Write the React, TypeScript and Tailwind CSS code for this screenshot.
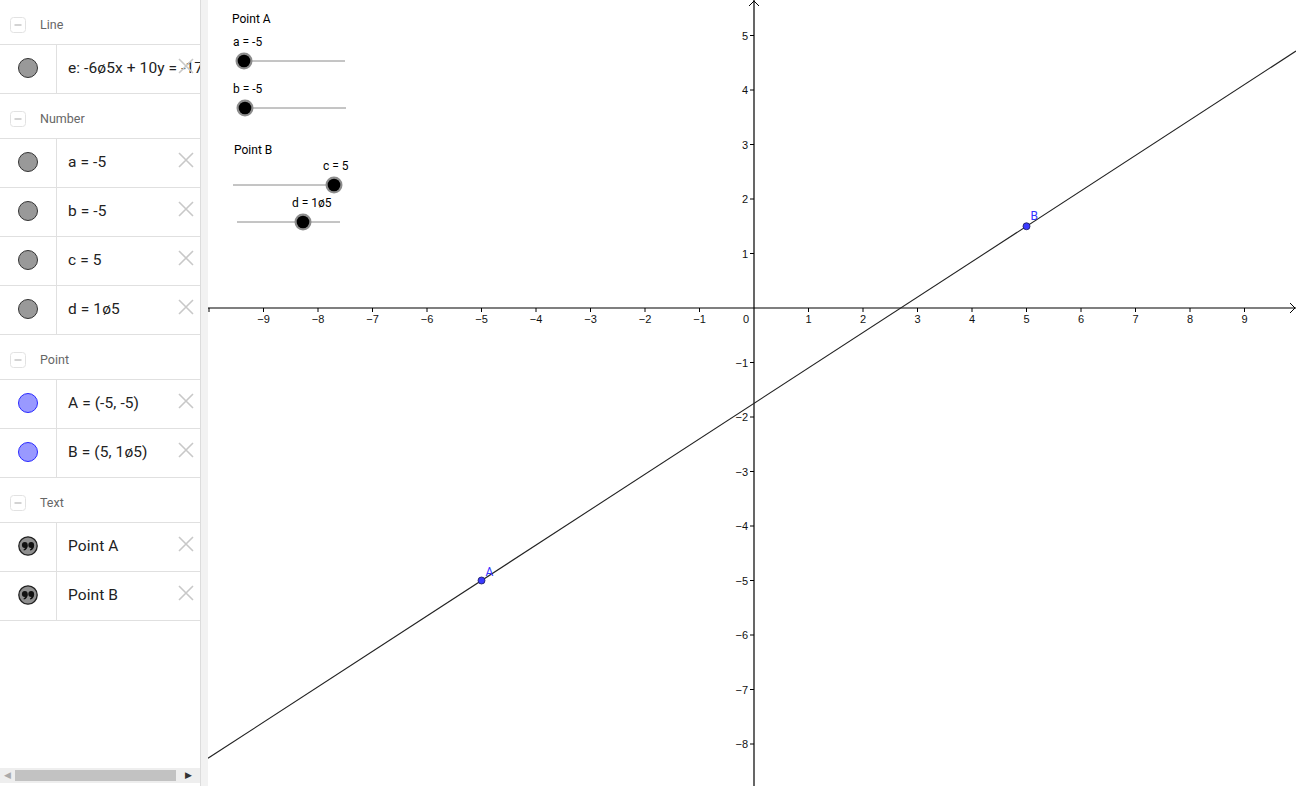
import React from "react";

type Row = { kind: "dot" | "point" | "text"; label: string };
type Group = { title: string; rows: Row[] };

const groups: Group[] = [
  { title: "Line", rows: [{ kind: "dot", label: "e: -6ø5x + 10y = -17ø5" }] },
  {
    title: "Number",
    rows: [
      { kind: "dot", label: "a = -5" },
      { kind: "dot", label: "b = -5" },
      { kind: "dot", label: "c = 5" },
      { kind: "dot", label: "d = 1ø5" },
    ],
  },
  {
    title: "Point",
    rows: [
      { kind: "point", label: "A = (-5, -5)" },
      { kind: "point", label: "B = (5, 1ø5)" },
    ],
  },
  {
    title: "Text",
    rows: [
      { kind: "text", label: "Point A" },
      { kind: "text", label: "Point B" },
    ],
  },
];

function Minus() {
  return (
    <svg width="16" height="16" viewBox="0 0 16 16">
      <rect x="0.5" y="0.5" width="15" height="15" rx="3" fill="#fff" stroke="#e2e2e2" />
      <line x1="4.5" y1="8" x2="11.5" y2="8" stroke="#c4c4c4" strokeWidth="1.5" />
    </svg>
  );
}

function Cross() {
  return (
    <svg width="18" height="18" viewBox="0 0 18 18">
      <path d="M2 2 L16 16 M16 2 L2 16" stroke="#c8c8c8" strokeWidth="1.6" />
    </svg>
  );
}

function Marker({ kind }: { kind: Row["kind"] }) {
  if (kind === "text") {
    return (
      <svg width="20" height="20" viewBox="0 0 20 20">
        <circle cx="10" cy="10" r="9.2" fill="#8f8f8f" stroke="#222" strokeWidth="1.3" />
        <circle cx="6.8" cy="9" r="2.9" fill="#111" />
        <circle cx="13.2" cy="9" r="2.9" fill="#111" />
        <path d="M9.7 9.2 C9.7 12.2, 8.4 13.8, 5.8 14.6 L5.5 13.6 C6.9 12.9, 7.3 12, 7.3 10.8 Z" fill="#111" />
        <path d="M16.1 9.2 C16.1 12.2, 14.8 13.8, 12.2 14.6 L11.9 13.6 C13.3 12.9, 13.7 12, 13.7 10.8 Z" fill="#111" />
      </svg>
    );
  }
  const blue = kind === "point";
  return (
    <span
      className={`block w-[20px] h-[20px] rounded-full border ${
        blue ? "bg-[#9999ff] border-[#2a2aff]" : "bg-[#999999] border-[#333333]"
      }`}
    />
  );
}

function AlgebraView() {
  return (
    <div className="w-[200px] h-full flex flex-col bg-white font-[Roboto,'Liberation_Sans',sans-serif]">
      <div className="flex-1 overflow-hidden">
        {groups.map((g) => (
          <div key={g.title}>
            <div className="h-[45px] flex items-center gap-[14px] pl-[10px] pt-[6px] border-b border-[#e0e0e0]">
              <Minus />
              <span className="text-[12.5px] text-[#666]">{g.title}</span>
            </div>
            {g.rows.map((r) => (
              <div key={r.label} className="relative h-[49px] flex border-b border-[#e0e0e0]">
                <div className="w-[57px] shrink-0 flex items-center justify-center pb-[3px] border-r border-[#e0e0e0]">
                  <Marker kind={r.kind} />
                </div>
                <div className="flex-1 flex items-center pl-[11px] overflow-hidden whitespace-nowrap text-[15.5px] text-[#222] tracking-[0.1px]">
                  {r.label}
                </div>
                <div className="absolute right-[5px] top-[12px]">
                  <Cross />
                </div>
              </div>
            ))}
          </div>
        ))}
      </div>
      <div className="h-[18px] flex items-start">
        <div className="h-[15px] w-full flex items-center bg-[#eeeeee]">
          <span className="w-[15px] flex justify-center text-[9px] text-[#aaa]">◀</span>
          <div className="flex-1 h-[11px] bg-[#c2c2c2]" />
          <span className="w-[24px] flex justify-center text-[9px] text-[#333]">▶</span>
        </div>
      </div>
    </div>
  );
}

const S = 54.5;
const OX = 546;
const OY = 308;
const W = 1088;
const H = 786;
const px = (x: number) => OX + x * S;
const py = (y: number) => OY - y * S;

function Slider({ x1, x2, y, knob }: { x1: number; x2: number; y: number; knob: number }) {
  return (
    <g>
      <line x1={x1} y1={y} x2={x2} y2={y} stroke="#8a8a8a" strokeWidth="1" />
      <circle cx={knob} cy={y} r="8.5" fill="#8c8c8c" />
      <circle cx={knob} cy={y} r="6.3" fill="#000" />
    </g>
  );
}

const tick = "font-['Liberation_Sans',Roboto,sans-serif] text-[11px]";
const lbl = "font-[Roboto,'Liberation_Sans',sans-serif] text-[12px]";

function Graphics() {
  const xs = Array.from({ length: 20 }, (_, i) => i - 10).filter((i) => i !== 0);
  const ys = [5, 4, 3, 2, 1, -1, -2, -3, -4, -5, -6, -7, -8];
  const lineY = (sx: number) => {
    const x = (sx - OX) / S;
    return py(-5 + 0.65 * (x + 5));
  };
  return (
    <div className="flex-1 h-full overflow-hidden bg-white">
      <svg width={W} height={H} viewBox={`0 0 ${W} ${H}`}>
        <line x1="0" y1={OY} x2={W} y2={OY} stroke="#000" strokeWidth="1.2" />
        <line x1={OX} y1="0" x2={OX} y2={H} stroke="#000" strokeWidth="1.2" />
        <polyline points={`${W - 6},${OY - 5} ${W - 1},${OY} ${W - 6},${OY + 5}`} fill="none" stroke="#000" />
        <polyline points={`${OX - 5},6 ${OX},1 ${OX + 5},6`} fill="none" stroke="#000" />
        {xs.map((i) => (
          <g key={`x${i}`}>
            <line x1={px(i)} y1={OY} x2={px(i)} y2={OY + 4} stroke="#000" />
            {i > -10 && (
              <text x={px(i)} y={OY + 15} textAnchor="middle" fill="#111" className={tick}>
                {i < 0 ? `\u2212${-i}` : i}
              </text>
            )}
          </g>
        ))}
        <text x={OX - 5} y={OY + 15} textAnchor="end" fill="#111" className={tick}>
          0
        </text>
        {ys.map((j) => (
          <g key={`y${j}`}>
            <line x1={OX - 4} y1={py(j)} x2={OX} y2={py(j)} stroke="#000" />
            <text x={OX - 6} y={py(j) + 4} textAnchor="end" fill="#111" className={tick}>
              {j < 0 ? `\u2212${-j}` : j}
            </text>
          </g>
        ))}
        <line x1="0" y1={lineY(0)} x2={W} y2={lineY(W)} stroke="#222" strokeWidth="1.1" />
        <circle cx={px(-5)} cy={py(-5)} r="3.5" fill="#3b3bff" stroke="#1a1a55" strokeWidth="0.8" />
        <circle cx={px(5)} cy={py(1.5)} r="3.5" fill="#3b3bff" stroke="#1a1a55" strokeWidth="0.8" />
        <text x={px(-5) + 4} y={py(-5) - 5} fill="#3333ff" className={lbl}>A</text>
        <text x={px(5) + 4} y={py(1.5) - 6} fill="#3333ff" className={lbl}>B</text>
        <text x="24" y="23" fill="#000" className={lbl}>Point A</text>
        <text x="25" y="46" fill="#000" className={lbl}>a = -5</text>
        <Slider x1={36} x2={137} y={61} knob={36} />
        <text x="25" y="93" fill="#000" className={lbl}>b = -5</text>
        <Slider x1={37} x2={138} y={108} knob={37} />
        <text x="26" y="154" fill="#000" className={lbl}>Point B</text>
        <text x="115" y="170" fill="#000" className={lbl}>c = 5</text>
        <Slider x1={25} x2={126} y={185} knob={126} />
        <text x="84" y="207" fill="#000" className={lbl}>d = 1ø5</text>
        <Slider x1={29} x2={132} y={222} knob={95} />
      </svg>
    </div>
  );
}

export default function App() {
  return (
    <div className="w-[1296px] h-[786px] flex overflow-hidden bg-white">
      <AlgebraView />
      <div className="w-[8px] h-full bg-[#f2f2f2] border-l border-[#dcdcdc]" />
      <Graphics />
    </div>
  );
}
